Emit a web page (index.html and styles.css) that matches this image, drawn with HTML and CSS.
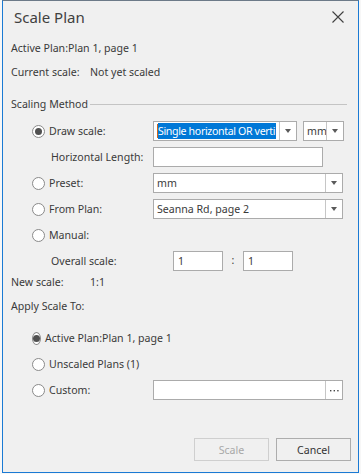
FILE: index.html
```html
<!DOCTYPE html>
<html lang="en">
<head>
    <meta charset="UTF-8">
    <title>Scale Plan</title>
    <link rel="stylesheet" href="styles.css">
</head>
<body>
    <div class="dialog">
        <div class="title-bar">
            <span class="title">Scale Plan</span>
            <svg class="close" width="12" height="12" viewBox="0 0 12 12">
                <path d="M0.5 0.5 L11.5 11.5 M11.5 0.5 L0.5 11.5" stroke="#404040" stroke-width="1.1" fill="none"/>
            </svg>
        </div>

        <div class="content">
            <div class="row info first">Active Plan:Plan 1, page 1</div>
            <div class="row info">
                <span class="key">Current scale:</span>
                <span>Not yet scaled</span>
            </div>

            <div class="row group">
                <span>Scaling Method</span>
                <span class="group-line"></span>
            </div>

            <div class="row control draw">
                <label class="option"><span class="radio checked"></span>Draw scale:</label>
                <div class="combo wide">
                    <div class="combo-text"><span class="caret"></span><span class="selected">Single horizontal OR verti</span></div>
                    <div class="combo-btn"><span class="arrow"></span></div>
                </div>
                <div class="combo unit">
                    <div class="combo-text">mm</div>
                    <div class="combo-btn"><span class="arrow"></span></div>
                </div>
            </div>

            <div class="row control">
                <span class="sub-label">Horizontal Length:</span>
                <div class="text-input length"></div>
            </div>

            <div class="row control">
                <label class="option"><span class="radio"></span>Preset:</label>
                <div class="combo full">
                    <div class="combo-text">mm</div>
                    <div class="combo-btn"><span class="arrow"></span></div>
                </div>
            </div>

            <div class="row control">
                <label class="option"><span class="radio"></span>From Plan:</label>
                <div class="combo full">
                    <div class="combo-text">Seanna Rd, page 2</div>
                    <div class="combo-btn"><span class="arrow"></span></div>
                </div>
            </div>

            <div class="row control">
                <label class="option"><span class="radio"></span>Manual:</label>
            </div>

            <div class="row control">
                <span class="sub-label overall">Overall scale:</span>
                <div class="text-input ratio">1</div>
                <span class="colon">:</span>
                <div class="text-input ratio">1</div>
            </div>

            <div class="row info new-scale">
                <span class="key">New scale:</span>
                <span>1:1</span>
            </div>

            <div class="row info apply">Apply Scale To:</div>

            <div class="row control apply-first">
                <label class="option"><span class="radio checked"></span>Active Plan:Plan 1, page 1</label>
            </div>
            <div class="row control">
                <label class="option"><span class="radio"></span>Unscaled Plans (1)</label>
            </div>
            <div class="row control">
                <label class="option"><span class="radio"></span>Custom:</label>
                <div class="combo full">
                    <div class="combo-text"></div>
                    <div class="combo-btn">
                        <svg width="9" height="3" viewBox="0 0 9 3">
                            <rect x="0" y="1" width="1.4" height="1.4" fill="#444"/>
                            <rect x="3.6" y="1" width="1.4" height="1.4" fill="#444"/>
                            <rect x="7.2" y="1" width="1.4" height="1.4" fill="#444"/>
                        </svg>
                    </div>
                </div>
            </div>
        </div>

        <div class="buttons">
            <button class="btn disabled">Scale</button>
            <button class="btn">Cancel</button>
        </div>
    </div>
</body>
</html>
```

FILE: styles.css
```css
body {
    margin: 0;
    padding: 0 2px 0 2px;
    background-color: #f7f7f7;
    font-family: 'Noto Sans', 'Liberation Sans', sans-serif;
    font-size: 10.6px;
    color: #3a3a3a;
}

.dialog {
    box-sizing: border-box;
    width: 357px;
    height: 473px;
    border: 1px solid #1a7ad4;
    border-top-color: #6c7a88;
    background-color: #f0f0f0;
    display: flex;
    flex-direction: column;
}

.title-bar {
    height: 31px;
    display: flex;
    align-items: center;
    justify-content: space-between;
    padding: 0 14px 0 11px;
}

.title {
    font-size: 15px;
    color: #404040;
}

.content {
    display: flex;
    flex-direction: column;
    gap: 6px;
    padding: 6px 8px 0 8px;
    flex: 1;
}

.row {
    height: 20px;
    display: flex;
    align-items: center;
}

.info + .info {
    margin-top: -2px;
}

.key {
    width: 79px;
}

.group {
    margin-top: 6px;
}

.group-line {
    flex: 1;
    height: 1px;
    background-color: #c4c4c4;
    margin-left: 2px;
    margin-right: 3px;
}

.draw {
    margin-top: 1px;
}

.option {
    width: 121px;
    margin-left: 21px;
    display: flex;
    align-items: center;
    white-space: nowrap;
}

.radio {
    box-sizing: border-box;
    width: 13px;
    height: 13px;
    border: 1px solid #8a8a8a;
    border-radius: 50%;
    background-color: #fff;
    margin-right: 4px;
    display: flex;
    align-items: center;
    justify-content: center;
}

.radio.checked::after {
    content: '';
    width: 7px;
    height: 7px;
    border-radius: 50%;
    background-color: #505050;
}

.sub-label {
    width: 102px;
    margin-left: 40px;
}

.combo {
    box-sizing: border-box;
    height: 20px;
    border: 1px solid #ababab;
    background-color: #fff;
    display: flex;
}

.combo.wide {
    width: 144px;
}

.combo.unit {
    width: 41px;
    margin-left: 6px;
}

.combo.full {
    width: 190px;
}

.combo-text {
    flex: 1;
    min-width: 0;
    display: flex;
    align-items: center;
    padding-left: 3px;
    overflow: hidden;
    white-space: nowrap;
}

.caret {
    width: 1px;
    height: 14px;
    background-color: #d0651a;
    flex-shrink: 0;
}

.selected {
    background-color: #0078d7;
    color: #fff;
    line-height: 16px;
    letter-spacing: -0.35px;
    padding-right: 1px;
}

.combo-btn {
    width: 16px;
    border-left: 1px solid #c6c6c6;
    display: flex;
    align-items: center;
    justify-content: center;
}

.arrow {
    width: 0;
    height: 0;
    border-left: 3.5px solid transparent;
    border-right: 3.5px solid transparent;
    border-top: 4px solid #5a5a5a;
}

.text-input {
    box-sizing: border-box;
    height: 20px;
    border: 1px solid #ababab;
    background-color: #fff;
    display: flex;
    align-items: center;
    padding-left: 4px;
}

.text-input.length {
    width: 170px;
}

.sub-label.overall {
    width: 122px;
}

.text-input.ratio {
    width: 50px;
}

.colon {
    width: 20px;
    text-align: center;
    margin-top: -2px;
}

.new-scale {
    margin-top: -5px;
}

.apply {
    margin-top: 9px;
}

.apply-first {
    margin-top: 6px;
}

.buttons {
    display: flex;
    justify-content: flex-end;
    gap: 7px;
    padding: 0 7px 11px 0;
}

.btn {
    box-sizing: border-box;
    width: 75px;
    height: 23px;
    font-family: inherit;
    font-size: 10.6px;
    color: #333;
    background-color: #f0f0f0;
    border: 1px solid #adadad;
    border-radius: 0;
    padding: 0;
}

.btn.disabled {
    color: #a8a8a8;
    border-color: #cfcfcf;
}
```
